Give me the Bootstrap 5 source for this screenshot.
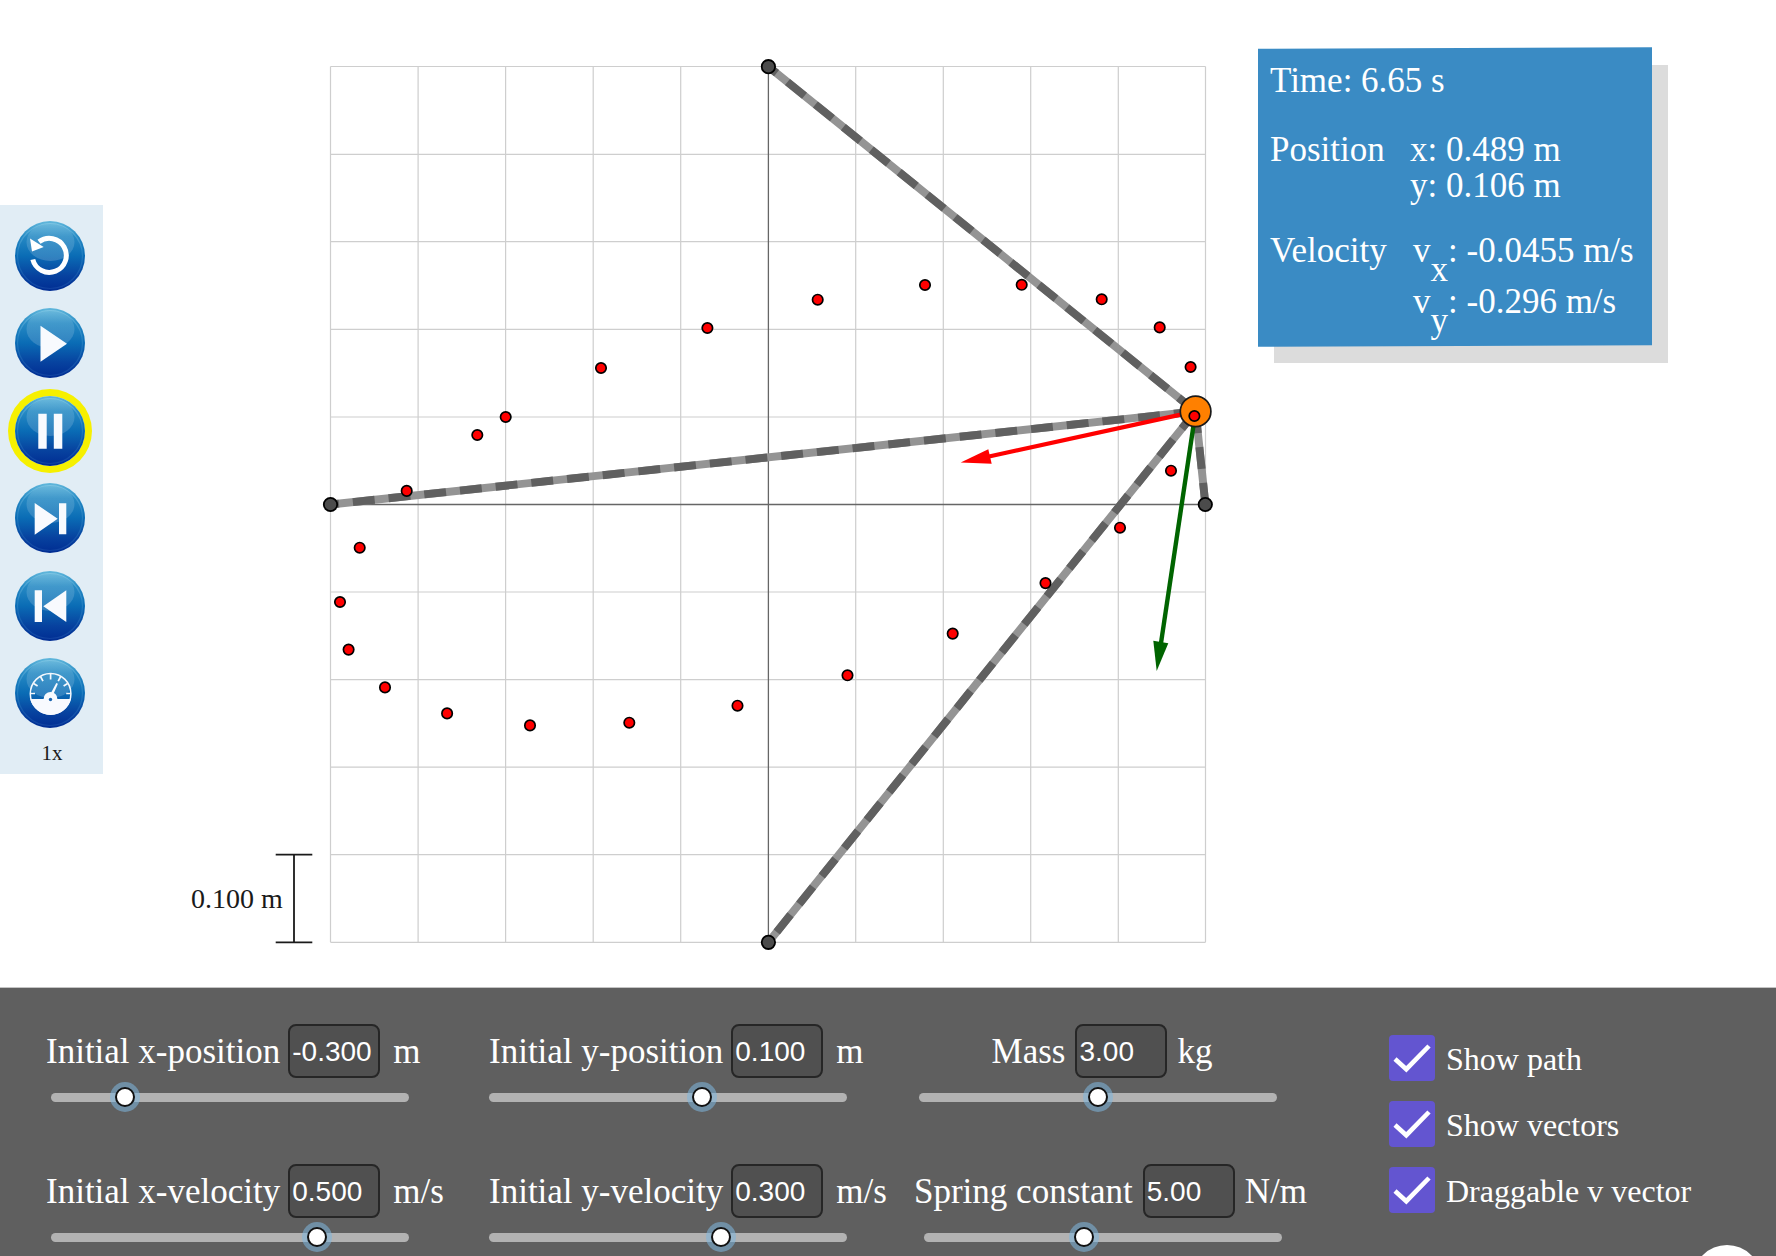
<!DOCTYPE html>
<html lang="en">
<head>
<meta charset="utf-8">
<meta name="viewport" content="width=device-width, initial-scale=1">
<title>Mass on four springs</title>
<link href="https://cdn.jsdelivr.net/npm/bootstrap@5.3.0/dist/css/bootstrap.min.css" rel="stylesheet">
<style>
  body { font-family: "Liberation Serif", serif; background: #fff; color: #1a1a1a; }

  /* playback sidebar */
  .player { width: 103px; margin-top: 205px; padding: 16px 18px 6px 15px; background: #e1edf5; }
  .player-list { min-height: 507px; }
  .player-btn { width: 70px; height: 70px; border-radius: 50%; }
  .player-btn svg { display: block; width: 70px; height: 70px; }
  .player-btn.current { box-shadow: 0 0 0 7px #f6f000; }
  .speed { font-size: 21px; line-height: 30px; margin-top: 10px; padding-left: 4px; }

  /* drawing area */
  .scene { min-width: 0; }
  .scene svg { display: block; width: 100%; height: auto; }

  /* readout */
  .readout-col { width: 518px; padding-top: 48px; }
  .readout { width: 394px; height: 298px; padding: 15px 12px 0; color: #fff; font-size: 35px; line-height: 36px; }
  .readout::before, .readout::after { content: ""; position: absolute; inset: 0; }
  .readout::before { background: #dcdcdc; transform: translate(16px, 17px); z-index: -2; }
  .readout::after { background: #3a8bc4; transform: skewY(-0.2deg); z-index: -1; }
  .readout-name { width: 140px; }
  .readout sub { font-size: 35px; bottom: -19px; line-height: 0; }
  .velocity-parts { padding-left: 3px; }
  .gap-position { margin-top: 33px; }
  .gap-velocity { margin-top: 29px; }
  .gap-component { margin-top: 15px; }

  /* controls */
  .controls {
    background: #5f5f5f; color: #fff; border-top: 1px solid #c4c4c4;
    padding: 36px 0 3px 46px; overflow: hidden;
    display: grid; grid-template-columns: 443fr 425fr 475fr 387fr;
  }
  .param-stack { gap: 51px; min-width: 0; }
  .param-line { font-size: 35px; line-height: 56px; height: 54px; gap: 8px; white-space: nowrap; }
  .param-line.wide-gap { gap: 10px; }
  .param-line.centered { width: 376px; justify-content: center; }
  .param-unit { padding-left: 5px; }
  .wide-gap .param-unit { padding-left: 0; }
  .param-box {
    width: 92px; height: 54px; padding: 2px 3px 0 2px; color: #fff; background: #505050;
    border: 2px solid #262626; border-radius: 8px;
    font-family: "Liberation Sans", sans-serif; font-size: 28px;
  }
  .param-range {
    display: block; appearance: none; width: 358px; height: 31px; margin: 4px 0 0; background: transparent;
  }
  .param-range.inset { margin-left: 5px; }
  .param-range.inset-wide { margin-left: 10px; }
  .param-range::-webkit-slider-runnable-track { height: 9px; border-radius: 5px; background: #b2b2b2; }
  .param-range::-webkit-slider-thumb {
    appearance: none; width: 20px; height: 20px; margin-top: -6px; border-radius: 50%;
    background: #fff; border: 2px solid #111; box-shadow: 0 0 0 5px rgba(125, 182, 222, .55);
  }
  .param-range::-moz-range-track { height: 9px; border-radius: 5px; background: #b2b2b2; }
  .param-range::-moz-range-thumb {
    width: 16px; height: 16px; border-radius: 50%;
    background: #fff; border: 2px solid #111; box-shadow: 0 0 0 5px rgba(125, 182, 222, .55);
  }
  .options { gap: 20px; padding-top: 11px; font-size: 32px; line-height: 48px; }
  .options .form-check { height: 46px; gap: 11px; margin: 0; padding: 0; min-height: 0; }
  .options .form-check-input {
    width: 46px; height: 46px; margin: 0; border: 0; border-radius: 4px; float: none; flex: none;
  }
  .options .form-check-input:checked {
    background-color: #6355d0; background-size: 46px 46px;
    background-image: url("data:image/svg+xml,%3Csvg xmlns='http://www.w3.org/2000/svg' viewBox='0 0 46 46'%3E%3Cpath d='M6 24l11.300 10.200L40 11' fill='none' stroke='%23fff' stroke-width='4.600'/%3E%3C/svg%3E");
  }
  .corner-btn { right: 15px; bottom: -57px; width: 68px; height: 68px; background: #fff; border-radius: 50%; }
</style>
<script src="https://cdn.jsdelivr.net/npm/bootstrap@5.3.0/dist/js/bootstrap.bundle.min.js"></script>
</head>
<body>

<svg width="0" height="0" class="position-absolute" aria-hidden="true">
  <defs>
    <linearGradient id="face" x1="0" y1="0" x2="0" y2="1">
      <stop offset="0" stop-color="#62b8dc"/><stop offset=".22" stop-color="#268ac4"/>
      <stop offset=".5" stop-color="#0a6cb5"/><stop offset=".78" stop-color="#07429f"/><stop offset="1" stop-color="#002c92"/>
    </linearGradient>
    <linearGradient id="rim" x1="0" y1="0" x2="0" y2="1">
      <stop offset="0" stop-color="#7cc6e4"/><stop offset=".5" stop-color="#2c86c6"/><stop offset="1" stop-color="#1a4ea8"/>
    </linearGradient>
    <linearGradient id="gloss" x1="0" y1="0" x2="0" y2="1">
      <stop offset="0" stop-color="#fff" stop-opacity=".1"/><stop offset="1" stop-color="#fff" stop-opacity=".17"/>
    </linearGradient>
    <symbol id="disc" viewBox="0 0 70 70">
      <circle cx="35" cy="35" r="35" fill="url(#face)"/>
      <circle cx="35" cy="35" r="32.500" fill="none" stroke="url(#rim)" stroke-width="1.200" opacity=".6"/>
      <ellipse cx="35.500" cy="21" rx="24" ry="19" fill="url(#gloss)"/>
    </symbol>
  </defs>
</svg>

<main class="d-flex align-items-start">
  <nav class="player flex-shrink-0" aria-label="Playback">
    <div class="player-list d-flex flex-column justify-content-between">
      <button type="button" class="player-btn btn p-0 border-0" aria-label="Reset">
        <svg viewBox="0 0 70 70"><use href="#disc"/><path d="M17.800 38.500A17 17 0 1 0 24 20.800" fill="none" stroke="#fff" stroke-width="5"/><path d="M15 17.500L17 30.500L28.700 26Z" fill="#fff"/></svg>
      </button>
      <button type="button" class="player-btn btn p-0 border-0" aria-label="Play">
        <svg viewBox="0 0 70 70"><use href="#disc"/><path d="M25.500 17.700V53.700L52 35.700Z" fill="#f8fafe"/></svg>
      </button>
      <button type="button" class="player-btn current btn p-0 border-0" aria-label="Pause">
        <svg viewBox="0 0 70 70"><use href="#disc"/><path d="M23.300 17.700h8.400v35h-8.400zM38.800 17.700h8.500v35h-8.500z" fill="#f8fafe"/></svg>
      </button>
      <button type="button" class="player-btn btn p-0 border-0" aria-label="Step forward">
        <svg viewBox="0 0 70 70"><use href="#disc"/><path d="M19.700 20V51.700L42.700 35.800ZM44 20.300h7.300v31H44z" fill="#f8fafe"/></svg>
      </button>
      <button type="button" class="player-btn btn p-0 border-0" aria-label="Step back">
        <svg viewBox="0 0 70 70"><use href="#disc"/><path d="M51.300 19.300V51L28.300 35.200ZM19.700 19.300h7.300v31.700h-7.300z" fill="#f8fafe"/></svg>
      </button>
      <button type="button" class="player-btn btn p-0 border-0" aria-label="Speed">
        <svg viewBox="0 0 70 70"><use href="#disc"/>
          <circle cx="35.600" cy="35.700" r="20.300" fill="none" stroke="#f4f8fd" stroke-width="1.500"/>
          <path d="M15.200 41H28.600A6.900 6.900 0 0 1 42.400 41H56A21 21 0 0 1 15.200 41Z" fill="#f8fafe"/>
          <circle cx="35.500" cy="41.500" r="1.700" fill="#1a65b0"/>
          <path d="M34.600 37.500L41.300 25L42.900 25.700L37.600 38Z" fill="#f8fafe"/>
          <path d="M35.600 16v5.500M25.500 18.500l2.500 4.600M18.600 25.500l4 2.500M15.500 35.500h4.500M45.700 18.500l-2.500 4.600M52.600 25.500l-4 2.500M55.700 35.500h-4.500" stroke="#f4f8fd" stroke-width="1.700"/>
        </svg>
      </button>
    </div>
    <div class="speed text-center">1x</div>
  </nav>

  <section class="scene flex-grow-1" aria-label="Simulation">
    <svg viewBox="103 0 1155 987" role="img" aria-label="Mass attached to four springs">
      <path fill="none" stroke="#cecece" stroke-width="1.200" d="M330.500 66.500V942.300M418.100 66.500V942.300M505.600 66.500V942.300M593.200 66.500V942.300M680.700 66.500V942.300M855.700 66.500V942.300M943.300 66.500V942.300M1030.700 66.500V942.300M1118.300 66.500V942.300M1205.500 66.500V942.300M330.500 66.500H1205.500M330.500 154.300H1205.500M330.500 241.600H1205.500M330.500 329.300H1205.500M330.500 417H1205.500M330.500 592H1205.500M330.500 679.700H1205.500M330.500 767.200H1205.500M330.500 854.700H1205.500M330.500 942.300H1205.500"/>
      <path fill="none" stroke="#666" stroke-width="1.300" d="M768.400 66.500V942.300M330.500 504.500H1205.500"/>

      <g fill="none" stroke-width="7.900">
        <path stroke="#949494" d="M1195.600 411.400L768.400 66.600M1195.600 411.400L330.500 504.500M1195.600 411.400L768.400 942.300M1195.600 411.400L1205.400 504.500"/>
        <path stroke="#606060" stroke-dasharray="21.900 14" d="M1195.600 411.400L768.400 66.600M1195.600 411.400L330.500 504.500M1195.600 411.400L768.400 942.300M1195.600 411.400L1205.400 504.500"/>
      </g>

      <g fill="#4b4b4b" stroke="#000" stroke-width="1.800">
        <circle cx="768.400" cy="66.700" r="6.700"/><circle cx="330.500" cy="504.500" r="6.700"/>
        <circle cx="768.400" cy="942.300" r="6.700"/><circle cx="1205.300" cy="504.500" r="6.700"/>
      </g>

      <path d="M1195.600 411.400L989 456.500" stroke="#f00" stroke-width="4.200"/>
      <path d="M960.700 462.500L988.300 449.300L991.700 463.700Z" fill="#f00"/>
      <path d="M1195.600 411.400L1161 643" stroke="#006400" stroke-width="4.400"/>
      <path d="M1156.700 671L1153.300 640.700L1168.300 643.300Z" fill="#006400"/>
      <circle cx="1195.600" cy="411.400" r="15.300" fill="#ff8000" stroke="#1a1a1a" stroke-width="1.700"/>

      <g fill="#f00" stroke="#000" stroke-width="1.700">
        <circle cx="406.700" cy="490.900" r="5.200"/><circle cx="477.300" cy="435" r="5.200"/><circle cx="505.700" cy="417" r="5.200"/>
        <circle cx="601" cy="368" r="5.200"/><circle cx="707.400" cy="328" r="5.200"/><circle cx="817.700" cy="299.700" r="5.200"/>
        <circle cx="925" cy="285" r="5.200"/><circle cx="1021.700" cy="284.800" r="5.200"/><circle cx="1101.700" cy="299.300" r="5.200"/>
        <circle cx="1159.700" cy="327.400" r="5.200"/><circle cx="1190.600" cy="367" r="5.200"/><circle cx="1194.400" cy="416" r="5.200"/>
        <circle cx="1171" cy="470.700" r="5.200"/><circle cx="1120" cy="527.700" r="5.200"/><circle cx="1045.500" cy="583.100" r="5.200"/>
        <circle cx="952.700" cy="633.600" r="5.200"/><circle cx="847.500" cy="675.300" r="5.200"/><circle cx="737.500" cy="705.700" r="5.200"/>
        <circle cx="629.300" cy="722.700" r="5.200"/><circle cx="530" cy="725.400" r="5.200"/><circle cx="447.100" cy="713.400" r="5.200"/>
        <circle cx="385" cy="687.400" r="5.200"/><circle cx="348.600" cy="649.600" r="5.200"/><circle cx="340" cy="602" r="5.200"/>
        <circle cx="359.700" cy="547.700" r="5.200"/>
      </g>

      <path d="M275.700 854.700H312.300M275.700 942.300H312.300M294 854.700V942.300" fill="none" stroke="#1a1a1a" stroke-width="1.800"/>
      <text x="191" y="908" font-size="28" fill="#1a1a1a">0.100 m</text>
    </svg>
  </section>

  <aside class="readout-col flex-shrink-0">
    <div class="readout position-relative z-0">
      <div>Time: 6.65 s</div>
      <div class="d-flex gap-position">
        <div class="readout-name">Position</div>
        <div><div>x: 0.489 m</div><div>y: 0.106 m</div></div>
      </div>
      <div class="d-flex gap-velocity">
        <div class="readout-name">Velocity</div>
        <div class="velocity-parts"><div>v<sub>x</sub>: -0.0455 m/s</div><div class="gap-component">v<sub>y</sub>: -0.296 m/s</div></div>
      </div>
    </div>
  </aside>
</main>

<form class="controls position-relative">
  <div class="param-stack d-flex flex-column">
    <div>
      <div class="param-line d-flex"><label for="x0">Initial x-position</label><input class="param-box" id="x0" type="text" value="-0.300"><span class="param-unit">m</span></div>
      <input class="param-range inset" type="range" min="0" max="100" step="0.1" value="19" aria-label="Initial x-position">
    </div>
    <div>
      <div class="param-line d-flex"><label for="vx0">Initial x-velocity</label><input class="param-box" id="vx0" type="text" value="0.500"><span class="param-unit">m/s</span></div>
      <input class="param-range inset" type="range" min="0" max="100" step="0.1" value="75.7" aria-label="Initial x-velocity">
    </div>
  </div>
  <div class="param-stack d-flex flex-column">
    <div>
      <div class="param-line d-flex"><label for="y0">Initial y-position</label><input class="param-box" id="y0" type="text" value="0.100"><span class="param-unit">m</span></div>
      <input class="param-range" type="range" min="0" max="100" step="0.1" value="60" aria-label="Initial y-position">
    </div>
    <div>
      <div class="param-line d-flex"><label for="vy0">Initial y-velocity</label><input class="param-box" id="vy0" type="text" value="0.300"><span class="param-unit">m/s</span></div>
      <input class="param-range" type="range" min="0" max="100" step="0.1" value="65.7" aria-label="Initial y-velocity">
    </div>
  </div>
  <div class="param-stack d-flex flex-column">
    <div>
      <div class="param-line wide-gap centered d-flex"><label for="mass">Mass</label><input class="param-box" id="mass" type="text" value="3.00"><span class="param-unit">kg</span></div>
      <input class="param-range inset" type="range" min="0" max="100" step="0.1" value="50" aria-label="Mass">
    </div>
    <div>
      <div class="param-line wide-gap d-flex"><label for="spring">Spring constant</label><input class="param-box" id="spring" type="text" value="5.00"><span class="param-unit">N/m</span></div>
      <input class="param-range inset-wide" type="range" min="0" max="100" step="0.1" value="44.3" aria-label="Spring constant">
    </div>
  </div>
  <div class="options d-flex flex-column">
    <div class="form-check d-flex"><input class="form-check-input" type="checkbox" id="show-path" checked><label for="show-path">Show path</label></div>
    <div class="form-check d-flex"><input class="form-check-input" type="checkbox" id="show-vectors" checked><label for="show-vectors">Show vectors</label></div>
    <div class="form-check d-flex"><input class="form-check-input" type="checkbox" id="drag-vector" checked><label for="drag-vector">Draggable v vector</label></div>
  </div>
  <button type="button" class="corner-btn btn p-0 border-0 position-absolute" aria-label="More"></button>
</form>

</body>
</html>
